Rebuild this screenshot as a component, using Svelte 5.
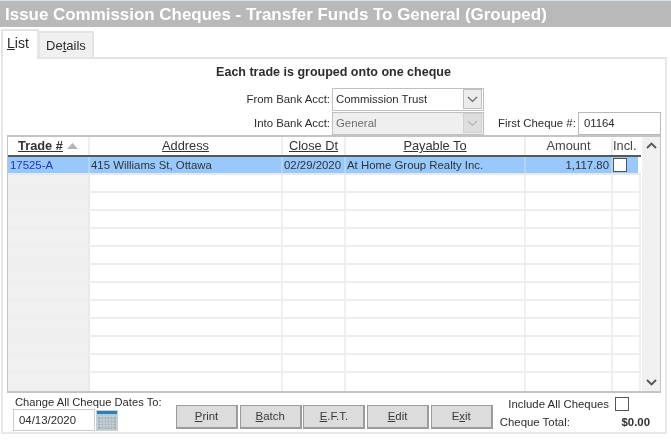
<script>
  const rows = [
    { trade: "17525-A", address: "415 Williams St, Ottawa", close: "02/29/2020", payable: "At Home Group Realty Inc.", amount: "1,117.80" }
  ];
  const blankRows = Array(12).fill(0);
  const buttons = [
    { key: "P", rest: "rint" },
    { key: "B", rest: "atch" },
    { key: "E", rest: ".F.T." },
    { key: "E", rest: "dit" },
    { pre: "E", key: "x", rest: "it" }
  ];
</script>

<div class="window">
  <div class="title">Issue Commission Cheques - Transfer Funds To General (Grouped)</div>

  <div class="tabs">
    <div class="tab active"><u>L</u>ist</div>
    <div class="tab">De<u>t</u>ails</div>
  </div>

  <div class="panel">
    <div class="heading">Each trade is grouped onto one cheque</div>

    <div class="form-row first">
      <span class="lbl">From Bank Acct:</span>
      <div class="combo">
        <span class="val">Commission Trust</span>
        <span class="drop">
          <svg width="11" height="7" viewBox="0 0 11 7"><path d="M1 1l4.500 4.500L10 1" fill="none" stroke="#666" stroke-width="1.200"/></svg>
        </span>
      </div>
    </div>
    <div class="form-row">
      <span class="lbl">Into Bank Acct:</span>
      <div class="combo disabled">
        <span class="val">General</span>
        <span class="drop">
          <svg width="11" height="7" viewBox="0 0 11 7"><path d="M1 1l4.500 4.500L10 1" fill="none" stroke="#b5b5b5" stroke-width="1.200"/></svg>
        </span>
      </div>
      <span class="lbl cheque-lbl">First Cheque #:</span>
      <div class="input cheque-no">01164</div>
    </div>

    <div class="grid-wrap">
      <div class="grid">
        <div class="head">
          <div class="hc sorted"><u>Trade #</u><svg width="11" height="6" viewBox="0 0 11 6"><path d="M5.500 0L11 6H0z" fill="#b4b4b4"/></svg></div>
          <div class="hc"><u>Address</u></div>
          <div class="hc"><u>Close Dt</u></div>
          <div class="hc"><u>Payable To</u></div>
          <div class="hc plain">Amount</div>
          <div class="hc plain incl">Incl.</div>
        </div>
        {#each rows as r}
          <div class="row selected">
            <div class="c trade">{r.trade}</div>
            <div class="c">{r.address}</div>
            <div class="c">{r.close}</div>
            <div class="c">{r.payable}</div>
            <div class="c num">{r.amount}</div>
            <div class="c chk"><span class="box"></span></div>
          </div>
        {/each}
        {#each blankRows as _}
          <div class="row">
            <div class="c fixed"></div>
            <div class="c"></div>
            <div class="c"></div>
            <div class="c"></div>
            <div class="c"></div>
            <div class="c"></div>
          </div>
        {/each}
      </div>
      <div class="scroll">
        <svg width="11" height="7" viewBox="0 0 11 7"><path d="M1 6l4.500-4.500L10 6" fill="none" stroke="#555" stroke-width="1.800"/></svg>
        <svg width="11" height="7" viewBox="0 0 11 7"><path d="M1 1l4.500 4.500L10 1" fill="none" stroke="#555" stroke-width="1.800"/></svg>
      </div>
    </div>

    <div class="footer">
      <div class="date-col">
        <div class="date-lbl">Change All Cheque Dates To:</div>
        <div class="date-row">
          <div class="input date">04/13/2020</div>
          <svg class="cal" width="22" height="21" viewBox="0 0 22 21">
            <rect width="22" height="21" fill="#c4ced3"/>
            <rect x="1" y="1" width="20" height="3" fill="#2f7fb5"/>
            <rect x="1" y="4" width="20" height="2" fill="#a8cde4"/>
            <rect x="2" y="7" width="18" height="12" fill="#a3afb6"/>
            <path d="M5 7v12M8 7v12M11 7v12M14 7v12M17 7v12M2 10h18M2 13h18M2 16h18" stroke="#ccd5da" stroke-width="1"/>
          </svg>
        </div>
      </div>
      <div class="buttons">
        {#each buttons as b}
          <div class="btn">{b.pre ?? ""}<u>{b.key}</u>{b.rest}</div>
        {/each}
      </div>
      <div class="totals">
        <div class="incl-all"><span>Include All Cheques</span><span class="box"></span></div>
        <div class="total"><span>Cheque Total:</span><b>$0.00</b></div>
      </div>
    </div>
  </div>
</div>

<style>
  :global(body) {
    background: #fff;
  }
  .window {
    width: 671px;
    height: 441px;
    overflow: hidden;
    padding-top: 1px;
    box-sizing: border-box;
    background: #fff;
    border-top: 1px solid #d5e3f0;
    font-family: "Liberation Sans", Arial, sans-serif;
    font-size: 11.400px;
    color: #2c2c2c;
    filter: blur(0.3px);
  }
  .title {
    height: 26px;
    line-height: 27px;
    margin-top: -1px;
    padding-left: 5px;
    background: #b9b9b9;
    color: #fff;
    font-size: 16.950px;
    font-weight: bold;
    white-space: nowrap;
  }
  .tabs {
    display: flex;
    align-items: flex-end;
    height: 30px;
    padding-left: 1px;
  }
  .tab {
    height: 26px;
    width: 56px;
    box-sizing: border-box;
    padding-top: 5px;
    text-align: center;
    font-size: 13px;
    background: #f0f0f0;
    border: 2px solid #e4e4e4;
    border-bottom: 0;
    margin-left: -1px;
  }
  .tab.active {
    width: 38px;
    height: 30px;
    margin: 0 0 -2px 0;
    padding: 4px 0 0 4px;
    text-align: left;
    font-size: 14px;
    background: #fff;
    position: relative;
    z-index: 1;
  }
  .panel {
    width: 666px;
    height: 377px;
    margin-left: 1px;
    box-sizing: border-box;
    border: 2px solid #e8e8e8;
    border-top-color: #e4e4e4;
    padding: 6px 0 0 4px;
  }
  .heading {
    text-align: center;
    font-size: 12.500px;
    font-weight: bold;
    height: 17px;
    line-height: 15px;
    width: 653px;
  }
  .form-row {
    display: flex;
    align-items: center;
    height: 24px;
  }
  .first {
    margin-top: 5px;
  }
  .lbl {
    width: 323px;
    text-align: right;
    margin-right: 2px;
    white-space: nowrap;
  }
  .combo {
    display: flex;
    align-items: center;
    justify-content: space-between;
    width: 152px;
    height: 23px;
    box-sizing: border-box;
    border: 1px solid #c0c0c0;
    padding: 0 1px 0 3px;
    background: #fff;
  }
  .combo.disabled {
    background: #efefef;
    color: #6d6d6d;
  }
  .drop {
    display: flex;
    align-items: center;
    justify-content: center;
    box-sizing: border-box;
    width: 19px;
    height: 20px;
    background: #ececec;
    border: 1px solid #c0c0c0;
  }
  .disabled .drop {
    background: #dedede;
    border-color: #d0d0d0;
  }
  .cheque-lbl {
    width: auto;
    margin: 0 2px 0 14px;
  }
  .input {
    box-sizing: border-box;
    border: 1px solid #b9b9b9;
    background: #fff;
    height: 23px;
    line-height: 21px;
    padding-left: 5px;
  }
  .cheque-no {
    width: 83px;
  }
  .grid-wrap {
    display: flex;
    width: 654px;
    height: 258px;
    box-sizing: border-box;
    border: 2px solid #c4c4c4;
    border-left-width: 1px;
    border-right-width: 1px;
    overflow: hidden;
  }
  .grid {
    width: 633px;
    flex: none;
  }
  .head, .row {
    display: grid;
    grid-template-columns: 82px 193px 63px 180px 87px 28px;
  }
  .head {
    height: 18px;
    border-bottom: 2px solid #55595c;
    font-size: 12.800px;
  }
  .hc {
    display: flex;
    align-items: center;
    justify-content: center;
    gap: 4px;
    border-right: 2px solid #eeeeee;
    white-space: nowrap;
    color: #333;
    line-height: 18px;
  }
  .hc.plain {
    color: #444;
  }
  .hc.incl {
    justify-content: flex-start;
    border-right: 0;
  }
  .sorted {
    font-weight: bold;
    background: #fff;
  }
  .row {
    height: 18px;
    box-sizing: border-box;
    border-bottom: 2px solid #eeeeee;
  }
  .row:last-child {
    border-bottom: 0;
  }
  .c {
    border-right: 2px solid #f0f0f0;
    padding-left: 1px;
    line-height: 16px;
    white-space: nowrap;
    overflow: hidden;
    background: #fff;
  }
  .fixed {
    background: #f0f0f0;
    border-right-color: #e8e8e8;
  }
  .selected .c {
    background: #99c9fc;
    border-right-color: #b5d3f3;
    color: #2c3238;
  }
  .selected .trade {
    color: #2033c4;
    padding-left: 2px;
  }
  .selected {
    border-bottom-color: #e8e8e8;
  }
  .num {
    text-align: right;
    padding-right: 2px;
  }
  .c.chk {
    display: flex;
    align-items: center;
    padding-left: 0;
    border-right: 3px solid #fff;
  }
  .box {
    display: inline-block;
    width: 14px;
    height: 14px;
    box-sizing: border-box;
    border: 1px solid #555;
    background: #fff;
  }
  .scroll {
    flex: none;
    width: 18px;
    margin-left: 1px;
    background: #f0f0f0;
    display: flex;
    flex-direction: column;
    align-items: center;
    justify-content: space-between;
    padding: 5px 0;
    box-sizing: border-box;
  }
  .footer {
    display: flex;
    align-items: flex-start;
    width: 658px;
  }
  .date-col {
    width: 169px;
    padding: 2px 0 0 6px;
    box-sizing: border-box;
    flex: none;
  }
  .date-lbl {
    line-height: 14px;
    margin-left: 2px;
    white-space: nowrap;
    font-size: 11.200px;
  }
  .date-row {
    display: flex;
    align-items: center;
    gap: 1px;
  }
  .date {
    width: 82px;
    height: 22px;
    line-height: 21px;
    border-color: #ccc;
  }
  .cal {
    display: block;
  }
  .buttons {
    display: flex;
    gap: 1.700px;
    margin-top: 12px;
  }
  .btn {
    width: 62px;
    height: 24px;
    line-height: 21px;
    box-sizing: border-box;
    text-align: center;
    background: #dcdcdc;
    border: 1px solid #9b9b9b;
    border-width: 1px 2px 2px 1px;
    color: #3a3a3a;
  }
  .totals {
    margin-left: 7px;
    flex: 1;
  }
  .incl-all {
    display: flex;
    justify-content: flex-end;
    align-items: center;
    gap: 6px;
    margin-top: 3px;
    padding-right: 36px;
    height: 15px;
  }
  .total {
    display: flex;
    justify-content: space-between;
    margin-top: 3px;
    padding-right: 15px;
    line-height: 16px;
  }
  .total b {
    color: #333;
  }
</style>
